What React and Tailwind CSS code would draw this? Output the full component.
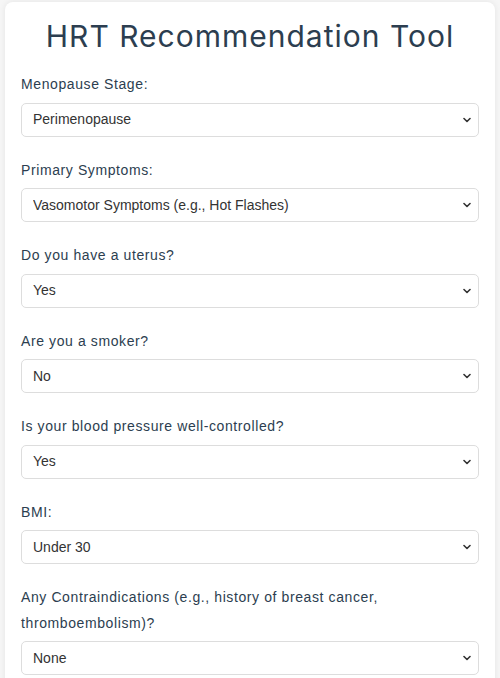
import React from "react";

const fields = [
  { label: "Menopause Stage:", value: "Perimenopause", options: ["Perimenopause", "Postmenopause", "Premature Ovarian Insufficiency"] },
  { label: "Primary Symptoms:", value: "Vasomotor Symptoms (e.g., Hot Flashes)", options: ["Vasomotor Symptoms (e.g., Hot Flashes)", "Genitourinary Symptoms", "Mood Changes", "Sleep Disturbances"] },
  { label: "Do you have a uterus?", value: "Yes", options: ["Yes", "No"] },
  { label: "Are you a smoker?", value: "No", options: ["No", "Yes"] },
  { label: "Is your blood pressure well-controlled?", value: "Yes", options: ["Yes", "No"] },
  { label: "BMI:", value: "Under 30", options: ["Under 30", "30 or Over"] },
  { label: "Any Contraindications (e.g., history of breast cancer, thromboembolism)?", value: "None", options: ["None", "Yes"] },
];

function Field({ label, value, options }) {
  return (
    <div className="mb-[21px]">
      <label className="block mb-[5px] text-[14px] leading-[25.5px] tracking-[0.6px] text-[#2c3e50] font-['Liberation_Sans',Arial,sans-serif]">
        {label}
      </label>
      <div className="relative">
        <select
          defaultValue={value}
          className="block w-full h-[34px] appearance-none rounded-[5px] border border-[#dddddd] bg-white pl-[11px] pr-8 text-[14px] text-[#333333] font-['Liberation_Sans',Arial,sans-serif] outline-none"
        >
          {options.map((o) => (
            <option key={o} value={o}>{o}</option>
          ))}
        </select>
        <svg
          className="pointer-events-none absolute right-[8px] top-1/2 -translate-y-1/2"
          width="8"
          height="6"
          viewBox="0 0 8 6"
          fill="none"
        >
          <path d="M1 1.5 L4 4.5 L7 1.5" stroke="#333" strokeWidth="1.6" strokeLinecap="round" strokeLinejoin="round" />
        </svg>
      </div>
    </div>
  );
}

export default function App() {
  return (
    <div className="min-h-[678px] bg-[#f6f6f6] px-[5px] pt-[2px]">
      <div className="rounded-[8px] bg-white px-4 pt-4 pb-6 shadow-[0_0_6px_rgba(0,0,0,0.08)]">
        <h1 className="mb-[18px] text-center text-[30px] leading-[36px] tracking-[1px] text-[#2c3e50] font-['Inter',sans-serif] font-normal">
          HRT Recommendation Tool
        </h1>
        {fields.map((f) => (
          <Field key={f.label} {...f} />
        ))}
        <button className="mt-2 w-full rounded-[5px] bg-[#2c3e50] py-3 text-white text-[16px] font-['Liberation_Sans',Arial,sans-serif]">
          Get Recommendation
        </button>
      </div>
    </div>
  );
}
